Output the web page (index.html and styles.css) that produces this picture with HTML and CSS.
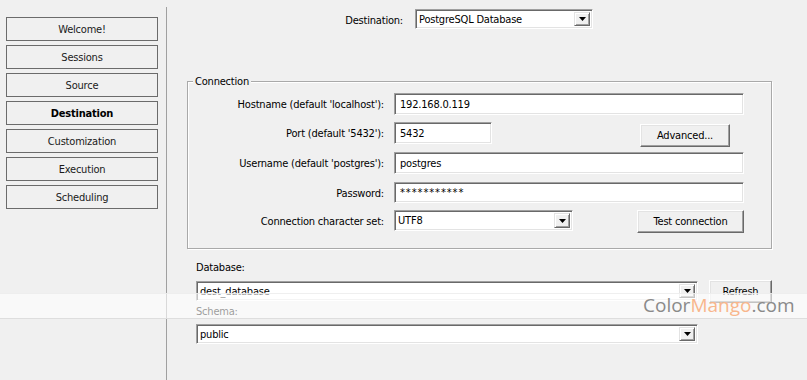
FILE: index.html
```html
<!DOCTYPE html>
<html>
<head>
<meta charset="utf-8">
<link rel="stylesheet" href="styles.css">
</head>
<body>
<div class="app">
  <nav class="sidebar">
    <div class="nav-btn">Welcome!</div>
    <div class="nav-btn">Sessions</div>
    <div class="nav-btn">Source</div>
    <div class="nav-btn active">Destination</div>
    <div class="nav-btn">Customization</div>
    <div class="nav-btn">Execution</div>
    <div class="nav-btn">Scheduling</div>
  </nav>
  <div class="divider"></div>
  <main class="content">
    <div class="dest-row">
      <span class="dest-label">Destination:</span>
      <div class="field select dest-select">
        <span class="value">PostgreSQL Database</span>
        <span class="drop"><svg width="7" height="4" viewBox="0 0 7 4"><path d="M0 0H7L3.5 4Z" fill="#000"/></svg></span>
      </div>
    </div>

    <div class="group">
      <span class="group-title">Connection</span>
      <div class="form">
        <label class="lbl">Hostname (default 'localhost'):</label>
        <div class="field input wide h22"><span class="value">192.168.0.119</span></div>

        <label class="lbl">Port (default '5432'):</label>
        <div class="port-row">
          <div class="field input port h22"><span class="value">5432</span></div>
          <div class="btn adv-btn">Advanced...</div>
        </div>

        <label class="lbl">Username (default 'postgres'):</label>
        <div class="field input wide h22"><span class="value">postgres</span></div>

        <label class="lbl">Password:</label>
        <div class="field input wide h21"><span class="value pw">***********</span></div>

        <label class="lbl">Connection character set:</label>
        <div class="charset-row">
          <div class="field select charset h21">
            <span class="value">UTF8</span>
            <span class="drop"><svg width="7" height="4" viewBox="0 0 7 4"><path d="M0 0H7L3.5 4Z" fill="#000"/></svg></span>
          </div>
          <div class="btn test-btn">Test connection</div>
        </div>
      </div>
    </div>

    <div class="db">
      <div class="db-label">Database:</div>
      <div class="db-row">
        <div class="field select db-select">
          <span class="value">dest_database</span>
          <span class="drop"><svg width="7" height="4" viewBox="0 0 7 4"><path d="M0 0H7L3.5 4Z" fill="#000"/></svg></span>
        </div>
        <div class="btn refresh-btn">Refresh</div>
      </div>
      <div class="schema-label">Schema:</div>
      <div class="field select db-select">
        <span class="value">public</span>
        <span class="drop"><svg width="7" height="4" viewBox="0 0 7 4"><path d="M0 0H7L3.5 4Z" fill="#000"/></svg></span>
      </div>
    </div>
  </main>
  <div class="watermark"><span class="wm-text"><span class="wm-gray">Color</span><span class="wm-orange">Mango</span><span class="wm-gray">.com</span></span></div>
</div>
</body>
</html>
```

FILE: styles.css
```css
* { box-sizing: border-box; }
html, body { margin: 0; padding: 0; }
body {
  background: #f0f0f0;
  font-family: "DejaVu Sans Condensed", "Liberation Sans", sans-serif;
  font-size: 11px;
  letter-spacing: -0.2px;
  color: #000;
}
.app {
  position: relative;
  display: flex;
  width: 807px;
  height: 380px;
  overflow: hidden;
  background: #f0f0f0;
}
.sidebar {
  width: 166px;
  flex: none;
  padding: 17px 0 0 6px;
  display: flex;
  flex-direction: column;
  gap: 4px;
}
.nav-btn {
  width: 152px;
  height: 24px;
  border: 1px solid #6b6b6b;
  display: flex;
  align-items: center;
  justify-content: center;
  line-height: 14px;
  padding-top: 2px;
  color: #1a1a1a;
}
.nav-btn.active { font-weight: bold; color: #000; }
.divider {
  width: 1px;
  flex: none;
  margin-top: 7px;
  background: #a0a0a0;
}
.content {
  flex: 1;
  padding-top: 9px;
}
.dest-row {
  display: flex;
  align-items: center;
  height: 20px;
}
.dest-label {
  width: 236px;
  text-align: right;
  margin-right: 12px;
  padding-top: 2px;
}
.field {
  position: relative;
  background: #fff;
  border-top: 1px solid #a0a0a0;
  border-left: 1px solid #a0a0a0;
  border-right: 1px solid #fff;
  border-bottom: 1px solid #fff;
  box-shadow: inset 1px 1px 0 #696969, inset -1px -1px 0 #e3e3e3;
  display: flex;
  align-items: center;
  line-height: 14px;
}
.field .value { padding-left: 3px; padding-top: 1px; white-space: nowrap; }
.input .value { padding-left: 5px; }
.value.pw { letter-spacing: 0.9px; }
.select { height: 20px; }
.drop {
  position: absolute;
  right: 2px;
  top: 2px;
  bottom: 2px;
  width: 16px;
  background: #f0f0f0;
  border-top: 1px solid #e3e3e3;
  border-left: 1px solid #e3e3e3;
  border-right: 1px solid #696969;
  border-bottom: 1px solid #696969;
  box-shadow: inset 1px 1px 0 #fff, inset -1px -1px 0 #a0a0a0;
  display: flex;
  align-items: center;
  justify-content: center;
}
.drop svg { display: block; }
.dest-select { width: 178px; }

.group {
  position: relative;
  margin: 52px 0 0 20px;
  width: 585px;
  height: 168px;
  border: 1px solid #a9a9a9;
  box-shadow: inset 1px 1px 0 #fff, 1px 1px 0 #fff;
  padding-top: 11px;
}
.group-title {
  position: absolute;
  top: -7px;
  left: 5px;
  padding: 0 2px;
  background: #f0f0f0;
  line-height: 14px;
}
.form {
  display: grid;
  grid-template-columns: 196px 350px;
  grid-template-rows: 29px 30px 30px 28px 23px;
  column-gap: 10px;
  align-items: start;
}
.lbl {
  text-align: right;
  line-height: 14px;
  padding-top: 5px;
  white-space: nowrap;
}
.h22 { height: 22px; }
.h21 { height: 21px; }
.wide { width: 350px; }
.port-row, .charset-row {
  display: flex;
  justify-content: space-between;
  align-items: flex-start;
}
.port { width: 98px; }
.charset { width: 179px; }
.btn {
  background: #f0f0f0;
  border-top: 1px solid #fff;
  border-left: 1px solid #fff;
  border-right: 1px solid #696969;
  border-bottom: 1px solid #696969;
  box-shadow: inset -1px -1px 0 #a0a0a0, inset 1px 1px 0 #e3e3e3;
  display: flex;
  align-items: center;
  justify-content: center;
  line-height: 14px;
  padding-top: 1px;
  white-space: nowrap;
}
.adv-btn { width: 90px; height: 23px; margin-top: 2px; margin-right: 14px; }
.test-btn { width: 107px; height: 23px; }

.db {
  margin-left: 29px;
  padding-top: 12px;
}
.db-label, .schema-label { line-height: 14px; }
.db-row {
  display: flex;
  align-items: flex-start;
  margin-top: 6px;
}
.db-select { width: 502px; }
.refresh-btn { width: 63px; height: 23px; margin-left: 11px; margin-top: -1px; }
.schema-label { margin-top: 2px; margin-bottom: 5px; }

.watermark {
  position: absolute;
  left: 0;
  right: 0;
  top: 293px;
  height: 26px;
  background: rgba(255, 255, 255, 0.6);
  border-top: 1px solid rgba(235, 235, 235, 0.8);
  border-bottom: 1px solid #dedede;
}
.wm-text {
  position: absolute;
  left: 643px;
  top: -2px;
  font-family: "Open Sans", "Noto Sans", sans-serif;
  font-size: 19px;
  letter-spacing: 0;
  line-height: 26px;
  white-space: nowrap;
}
.wm-gray { color: #8a8a8a; }
.wm-orange { color: #f8b68c; }
```
